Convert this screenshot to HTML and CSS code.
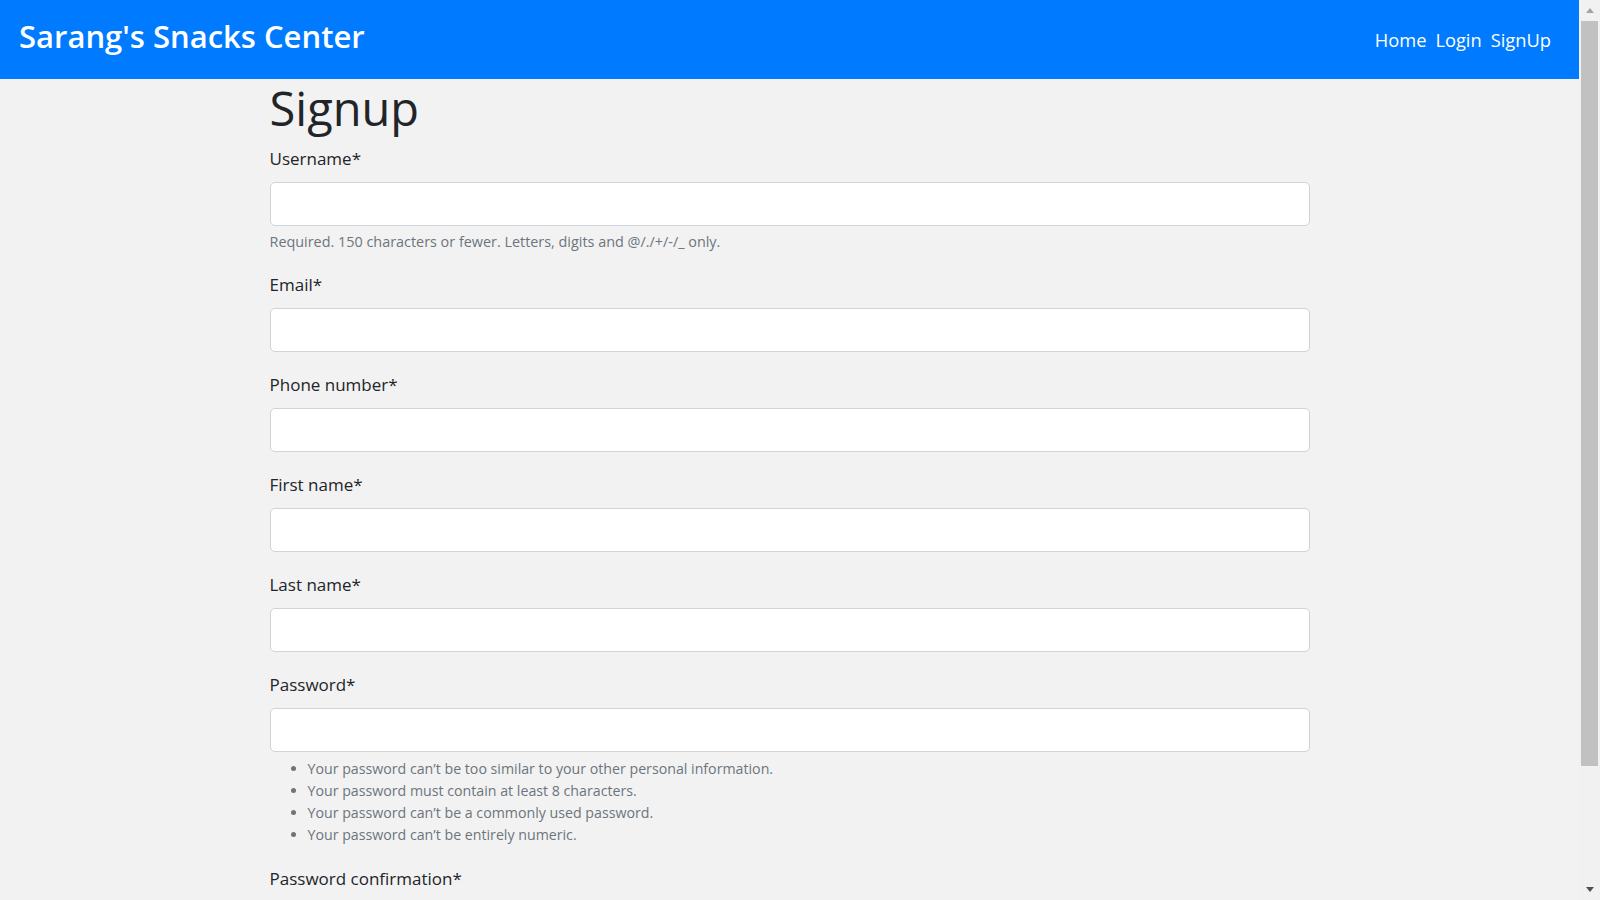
FILE: index.html
```html
<!DOCTYPE html>
<html>
<head>
	<meta charset="UTF-8">
	<title>Signup</title>
	<link rel="stylesheet" href="styles.css">
</head>
<body>
	<nav class="navbar">
		<a class="marca" href="#">Sarang's Snacks Center</a>
		<ul class="enlaces">
			<li><a href="#">Home</a></li>
			<li><a href="#">Login</a></li>
			<li><a href="#">SignUp</a></li>
		</ul>
	</nav>

	<div class="contenedor">
		<h1>Signup</h1>
		<form method="post">
			<div class="grupo">
				<label for="id_username">Username*</label>
				<input type="text" id="id_username" class="campo">
				<small class="ayuda">Required. 150 characters or fewer. Letters, digits and @/./+/-/_ only.</small>
			</div>
			<div class="grupo">
				<label for="id_email">Email*</label>
				<input type="email" id="id_email" class="campo">
			</div>
			<div class="grupo">
				<label for="id_phone">Phone number*</label>
				<input type="text" id="id_phone" class="campo">
			</div>
			<div class="grupo">
				<label for="id_first_name">First name*</label>
				<input type="text" id="id_first_name" class="campo">
			</div>
			<div class="grupo">
				<label for="id_last_name">Last name*</label>
				<input type="text" id="id_last_name" class="campo">
			</div>
			<div class="grupo">
				<label for="id_password1">Password*</label>
				<input type="password" id="id_password1" class="campo">
				<ul class="ayuda lista">
					<li>Your password can’t be too similar to your other personal information.</li>
					<li>Your password must contain at least 8 characters.</li>
					<li>Your password can’t be a commonly used password.</li>
					<li>Your password can’t be entirely numeric.</li>
				</ul>
			</div>
			<div class="grupo">
				<label for="id_password2">Password confirmation*</label>
				<input type="password" id="id_password2" class="campo">
			</div>
		</form>
	</div>

	<!-- barra de desplazamiento dibujada -->
	<div class="barra">
		<span class="flecha arriba"></span>
		<span class="pulgar"></span>
		<span class="flecha abajo"></span>
	</div>
</body>
</html>
```

FILE: styles.css
```css
html{
	background: #f2f2f2;
	overflow: hidden;
}

body{
	margin: 0 21px 0 0;
	font-family: "Open Sans", "Noto Sans", sans-serif;
	color: #212529;
	background: #f2f2f2;
}

.navbar{
	display: flex;
	align-items: center;
	justify-content: space-between;
	height: 79px;
	padding: 0 28px 0 19px;
	background: #007bff;
}

.marca{
	color: #fff;
	font-size: 31px;
	font-weight: 600;
	text-decoration: none;
	margin-top: -7px;
}

.enlaces{
	display: flex;
	gap: 9px;
	list-style: none;
	margin: -1px 0 0;
	padding: 0;
}

.enlaces a{
	color: #fff;
	font-size: 18.3px;
	text-decoration: none;
}

.contenedor{
	width: 1040px;
	margin: 0 auto;
}

h1{
	font-size: 47px;
	font-weight: 500;
	line-height: 58px;
	margin: 0 0 8px;
}

.grupo{
	margin-bottom: 19px;
}

.grupo label{
	display: block;
	font-size: 17px;
	line-height: 28px;
	margin-bottom: 9px;
}

.campo{
	display: block;
	box-sizing: border-box;
	width: 100%;
	height: 44px;
	border: 1px solid #ced4da;
	border-radius: 5px;
	background: #fff;
	font-family: inherit;
	font-size: 17px;
	padding: 0 15px;
}

.ayuda{
	display: block;
	margin-top: 6px;
	font-size: 14.4px;
	line-height: 20px;
	color: #6c757d;
}

.lista{
	margin: 6px 0 0;
	padding-left: 38px;
	font-size: 14.2px;
	line-height: 22px;
}

.barra{
	position: fixed;
	top: 0;
	right: 0;
	bottom: 0;
	width: 21px;
	display: flex;
	flex-direction: column;
	align-items: center;
	background: #f1f1f1;
}

.flecha{
	height: 21px;
	width: 21px;
	display: flex;
	align-items: center;
	justify-content: center;
	flex-shrink: 0;
}

.flecha::before{
	content: "";
	border-left: 4.5px solid transparent;
	border-right: 4.5px solid transparent;
}

.arriba::before{
	border-bottom: 5px solid #a3a3a3;
}

.abajo{
	margin-top: auto;
}

.abajo::before{
	border-top: 5px solid #505050;
}

.pulgar{
	width: 17px;
	height: 745px;
	background: #c1c1c1;
}
```
